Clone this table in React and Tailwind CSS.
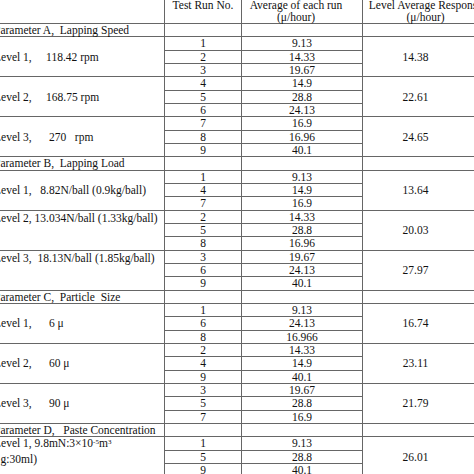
import React from "react";

const groups = [
  {
    param: "Parameter A,  Lapping Speed",
    levels: [
      { label: "Level 1,     118.42 rpm", runs: ["1", "2", "3"], avg: ["9.13", "14.33", "19.67"], level: "14.38" },
      { label: "Level 2,     168.75 rpm", runs: ["4", "5", "6"], avg: ["14.9", "28.8", "24.13"], level: "22.61" },
      { label: "Level 3,      270   rpm", runs: ["7", "8", "9"], avg: ["16.9", "16.96", "40.1"], level: "24.65" },
    ],
  },
  {
    param: "Parameter B,  Lapping Load",
    levels: [
      { label: "Level 1,   8.82N/ball (0.9kg/ball)", runs: ["1", "4", "7"], avg: ["9.13", "14.9", "16.9"], level: "13.64" },
      { label: "Level 2, 13.034N/ball (1.33kg/ball)", runs: ["2", "5", "8"], avg: ["14.33", "28.8", "16.96"], level: "20.03", top: true },
      { label: "Level 3,  18.13N/ball (1.85kg/ball)", runs: ["3", "6", "9"], avg: ["19.67", "24.13", "40.1"], level: "27.97", top: true },
    ],
  },
  {
    param: "Parameter C,  Particle  Size",
    levels: [
      { label: "Level 1,      6 μ", runs: ["1", "6", "8"], avg: ["9.13", "24.13", "16.966"], level: "16.74" },
      { label: "Level 2,      60 μ", runs: ["2", "4", "9"], avg: ["14.33", "14.9", "40.1"], level: "23.11" },
      { label: "Level 3,      90 μ", runs: ["3", "5", "7"], avg: ["19.67", "28.8", "16.9"], level: "21.79" },
    ],
  },
  {
    param: "Parameter D,   Paste Concentration",
    levels: [
      {
        label: (
          <div className="-mt-[3px]">
            Level 1, 9.8mN:3×10<sup className="text-[7px]">-5</sup>m<sup className="text-[7px]">3</sup>
            <br />
            <span className="inline-block -ml-[3px]">(1g:30ml)</span>
          </div>
        ),
        runs: ["1", "5", "9"],
        avg: ["9.13", "28.8", "40.1"],
        level: "26.01",
        top: true,
        multi: true,
      },
    ],
  },
];

const cell = "border border-[#666] p-0";

function App() {
  return (
    <div
      className="w-[474px] h-[474px] overflow-hidden bg-white text-[#111]"
      style={{ fontFamily: '"Liberation Serif", "Times New Roman", serif' }}
    >
      <table className="table-fixed border-collapse w-[506px] -ml-[10px] -mt-[1px] text-[11.5px] leading-[12px]">
        <colgroup>
          <col className="w-[174px]" />
          <col className="w-[77px]" />
          <col className="w-[121px]" />
          <col className="w-[134px]" />
        </colgroup>
        <thead>
          <tr className="h-[24.5px]">
            <th className={`${cell} border-t-0 font-normal`}></th>
            <th className={`${cell} border-t-0 font-normal align-top`}>Test Run No.</th>
            <th className={`${cell} border-t-0 font-normal align-top pr-[12px]`}>
              Average of each run
              <br />
              (μ/hour)
            </th>
            <th className={`${cell} border-t-0 font-normal align-top whitespace-nowrap pr-[8px]`}>
              Level Average Response
              <br />
              (μ/hour)
            </th>
          </tr>
        </thead>
        <tbody>
          {groups.map((g, gi) => (
            <React.Fragment key={gi}>
              <tr className="h-[13.333px]">
                <td className={`${cell} pl-[3px] text-left whitespace-pre`}>{g.param}</td>
                <td className={cell}></td>
                <td className={cell}></td>
                <td className={cell}></td>
              </tr>
              {g.levels.map((lv, li) =>
                lv.runs.map((r, ri) => (
                  <tr key={`${li}-${ri}`} className="h-[13.333px]">
                    {ri === 0 && (
                      <td
                        rowSpan={3}
                        className={`${cell} pl-[3px] text-left whitespace-pre ${lv.top ? "align-top pt-[1px]" : "align-middle"} ${lv.multi ? "leading-[16px]" : ""}`}
                      >
                        {lv.label}
                      </td>
                    )}
                    <td className={`${cell} text-center`}>{r}</td>
                    <td className={`${cell} text-center`}>{lv.avg[ri]}</td>
                    {ri === 0 && (
                      <td rowSpan={3} className={`${cell} text-center align-middle pr-[28px]`}>
                        {lv.level}
                      </td>
                    )}
                  </tr>
                ))
              )}
            </React.Fragment>
          ))}
        </tbody>
      </table>
    </div>
  );
}

export default App;
